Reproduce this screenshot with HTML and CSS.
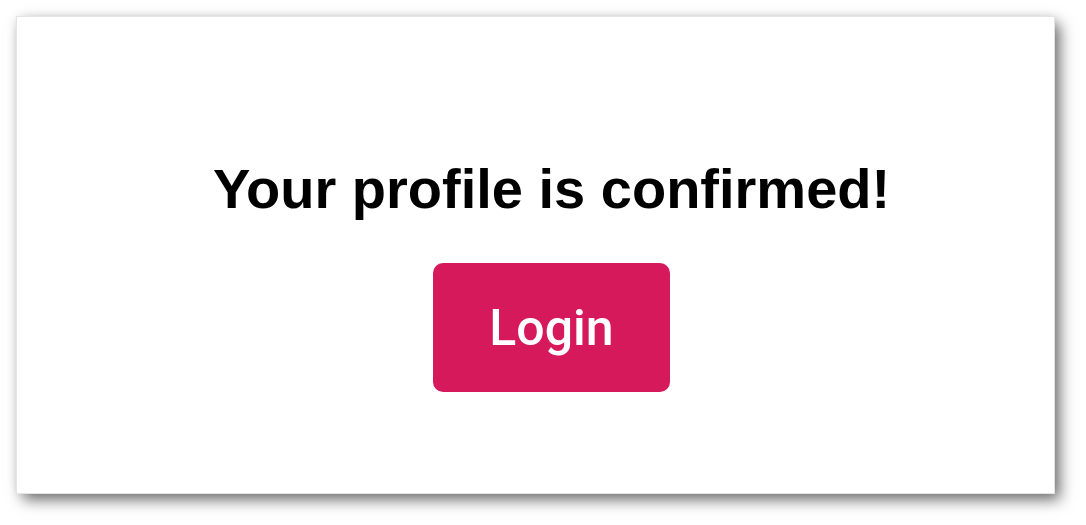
FILE: index.html
```html
<!DOCTYPE html>
<html lang="en">
<head>
<meta charset="utf-8">
<title>Profile confirmed</title>
<link rel="stylesheet" href="styles.css">
</head>
<body>
<main class="card">
  <h1 class="title">Your profile is confirmed!</h1>
  <button class="login-btn" type="button">Login</button>
</main>
</body>
</html>
```
FILE: styles.css
```css
html, body {
  margin: 0;
  background: #ffffff;
}
body {
  box-sizing: border-box;
  min-height: 525px;
  padding: 17px 0 32px 17px;
}
.card {
  box-sizing: border-box;
  width: 1037px;
  height: 476px;
  background: #ffffff;
  box-shadow: 0 0 0 1px #e4e4e4, 0 0 10px rgba(0, 0, 0, 0.12), 6px 7px 14px rgba(0, 0, 0, 0.55);
  display: flex;
  flex-direction: column;
  align-items: center;
  padding: 140px 0 0 32px;
}
.title {
  margin: 0;
  font-family: "Liberation Sans", Arial, sans-serif;
  font-weight: 700;
  font-size: 56px;
  line-height: 64px;
  color: #000000;
}
.login-btn {
  margin-top: 42px;
  width: 237px;
  height: 129px;
  border: none;
  border-radius: 10px;
  background: #d6195a;
  color: #ffffff;
  font-family: Roboto, "Liberation Sans", sans-serif;
  font-size: 50px;
  font-weight: 500;
  padding: 0;
  display: flex;
  align-items: center;
  justify-content: center;
}
```
